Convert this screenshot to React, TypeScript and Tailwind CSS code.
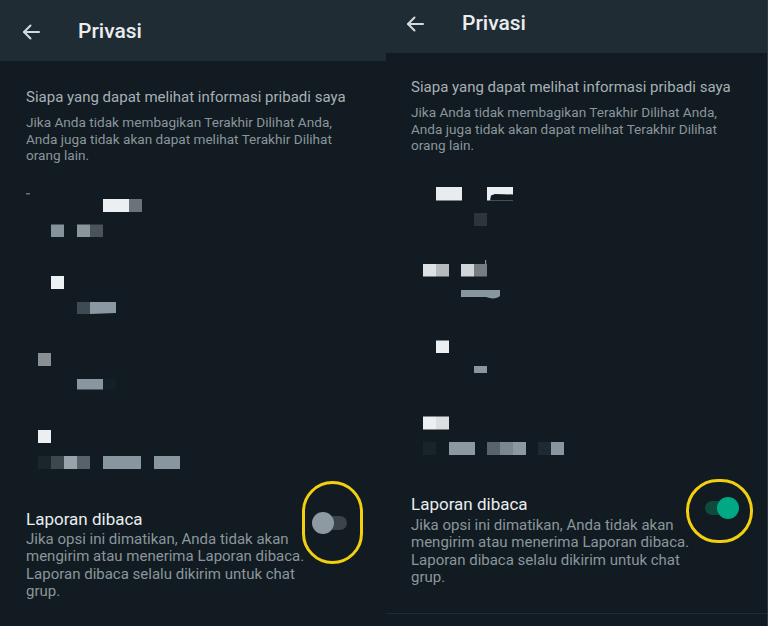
import React from "react";

type Block = { x: number; y: number; w: number; h: number; c: string };

// sensor mozaik (koordinat relatif ke svg)
const LEFT_BLOCKS: Block[] = [
  { x: 26, y: 10, w: 4, h: 1.5, c: "#6b7378" },
  { x: 103, y: 16, w: 26, h: 13, c: "#eceff1" },
  { x: 129, y: 16, w: 13, h: 13, c: "#6b7378" },
  { x: 51, y: 41.5, w: 13, h: 12.5, c: "#87939a" },
  { x: 77, y: 41.5, w: 13, h: 12.5, c: "#8a959c" },
  { x: 90, y: 41.5, w: 13, h: 12.5, c: "#4a5358" },
  { x: 51, y: 93, w: 13, h: 13, c: "#eef1f3" },
  { x: 77, y: 119, w: 13, h: 12, c: "#3f4b52" },
  { x: 38, y: 170, w: 13, h: 13, c: "#8a8f93" },
  { x: 77, y: 196, w: 26, h: 10.5, c: "#8896a0" },
  { x: 103, y: 196, w: 13, h: 10.5, c: "#142026" },
  { x: 38, y: 247, w: 13, h: 13, c: "#eceff1" },
  { x: 38, y: 273, w: 13, h: 13, c: "#1b262c" },
  { x: 51, y: 273, w: 13, h: 13, c: "#3d484e" },
  { x: 64, y: 273, w: 13, h: 13, c: "#98a3aa" },
  { x: 77, y: 273, w: 13, h: 13, c: "#57626a" },
  { x: 103, y: 273, w: 38, h: 13, c: "#8896a0" },
  { x: 154, y: 273, w: 26, h: 13, c: "#8896a0" },
];

const RIGHT_BLOCKS: Block[] = [
  { x: 50, y: 8, w: 26, h: 13.5, c: "#e9ecee" },
  { x: 101, y: 8, w: 26, h: 13.5, c: "#eceff1" },
  { x: 88, y: 34, w: 13, h: 13, c: "#2b353a" },
  { x: 37, y: 85, w: 13, h: 12.5, c: "#dde1e3" },
  { x: 50, y: 85, w: 13, h: 12.5, c: "#b6babc" },
  { x: 75, y: 85, w: 13, h: 12.5, c: "#d0d5d8" },
  { x: 88, y: 85, w: 13, h: 12.5, c: "#767c80" },
  { x: 50, y: 161.5, w: 13, h: 12.5, c: "#eceff1" },
  { x: 88, y: 187, w: 13, h: 7, c: "#8896a0" },
  { x: 37, y: 237.5, w: 13, h: 13, c: "#eceff1" },
  { x: 50, y: 237.5, w: 13, h: 13, c: "#dcdfe1" },
  { x: 37, y: 263, w: 13, h: 13, c: "#18232a" },
  { x: 63, y: 263, w: 26, h: 13, c: "#8d99a1" },
  { x: 101, y: 263, w: 13, h: 13, c: "#58646b" },
  { x: 114, y: 263, w: 13, h: 13, c: "#7b878e" },
  { x: 127, y: 263, w: 13, h: 13, c: "#8d99a1" },
  { x: 152, y: 263, w: 13, h: 13, c: "#1e2a31" },
  { x: 165, y: 263, w: 13, h: 13, c: "#8896a0" },
];

function BackArrow() {
  return (
    <svg width="18" height="16" viewBox="0 0 18 16" fill="none" stroke="#d3d9dc" strokeWidth="2" strokeLinecap="round" strokeLinejoin="round">
      <path d="M17 8H2" />
      <path d="M8.5 1.5 2 8l6.5 6.5" />
    </svg>
  );
}

function Switch({ on }: { on: boolean }) {
  return (
    <div className="relative h-[22px] w-[37px] shrink-0">
      <div className={`absolute left-[3px] top-[4px] h-[14px] w-[32px] rounded-full ${on ? "bg-[#0f4a3e]" : "bg-[#3a4449]"}`} />
      <div className={`absolute top-0 h-[22px] w-[22px] rounded-full ${on ? "left-[15px] bg-[#00a884]" : "left-0 bg-[#8e9aa2]"}`} />
    </div>
  );
}

function Intro() {
  return (
    <>
      <p className="text-[15px] leading-[18px] text-[#a7b0b5]">Siapa yang dapat melihat informasi pribadi saya</p>
      <p className="mt-[8px] w-[322px] text-[13.6px] leading-[16.5px] text-[#8a969c]">
        Jika Anda tidak membagikan Terakhir Dilihat Anda, Anda juga tidak akan dapat melihat Terakhir Dilihat orang lain.
      </p>
    </>
  );
}

function ReadReceipt({ on }: { on: boolean }) {
  return (
    <div>
      <p className="text-[17px] leading-[20px] text-[#e9edef]">Laporan dibaca</p>
      <p className={`${on ? "mt-[3px]" : "mt-[2px]"} w-[286px] text-[15px] leading-[17.5px] text-[#8a969c]`}>
        Jika opsi ini dimatikan, Anda tidak akan mengirim atau menerima Laporan dibaca. Laporan dibaca selalu dikirim untuk chat grup.
      </p>
    </div>
  );
}

export default function App() {
  return (
    <div className="flex h-[626px] w-[768px] overflow-hidden bg-[#111b21] font-['Roboto','Liberation_Sans',sans-serif]">
      {/* panel kiri: opsi mati */}
      <div className="flex w-[386px] shrink-0 flex-col">
        <div className="flex h-[61px] items-center bg-[#202c33] pl-[22px] pt-[2px]">
          <BackArrow />
          <span className="ml-[38px] text-[21px] font-medium text-[#e9edef]">Privasi</span>
        </div>
        <div className="flex-1 pl-[26px] pt-[27px]">
          <Intro />
          <div className="-ml-[26px] mt-[19px]">
            <svg width="386" height="290" className="block">
              {LEFT_BLOCKS.map((b, i) => (
                <rect key={i} x={b.x} y={b.y} width={b.w} height={b.h} fill={b.c} />
              ))}
              <polygon points="90,119 116,119 116,130 90,131" fill="#8a98a1" />
            </svg>
          </div>
          <div className="mt-[36px] flex items-start justify-between pr-[37px]">
            <ReadReceipt on={false} />
            <div className="relative mt-[3px]">
              <Switch on={false} />
              <div className="absolute -left-[10px] -top-[31px] h-[83px] w-[61px] rounded-full border-[3.5px] border-[#f3d00f]" />
            </div>
          </div>
        </div>
      </div>

      {/* panel kanan: opsi aktif */}
      <div className="flex w-[382px] shrink-0 flex-col border-r border-[#2c3a42]">
        <div className="flex h-[53px] items-center bg-[#202c33] pb-[5px] pl-[20px]">
          <BackArrow />
          <span className="ml-[38px] text-[21px] font-medium text-[#e9edef]">Privasi</span>
        </div>
        <div className="flex-1">
          <div className="pl-[25px] pt-[25px]">
            <Intro />
          </div>
          <div className="mt-[25px]">
            <svg width="382" height="285" className="block">
              {RIGHT_BLOCKS.map((b, i) => (
                <rect key={i} x={b.x} y={b.y} width={b.w} height={b.h} fill={b.c} />
              ))}
              <polygon points="104,21.5 105,16.5 109,15 127,15.5 127,21.5" fill="#111b21" />
              <path d="M75 111h39v6c-3 3-9 3-14 1h-25z" fill="#8896a0" />
              <rect x="99" y="81" width="1.2" height="4" fill="#8896a0" />
            </svg>
          </div>
          <div className="mt-[30px] border-b border-[#1f2c33] pb-[26px] pl-[25px] pr-[28px]">
            <div className="flex items-start justify-between">
              <ReadReceipt on />
              <div className="relative mt-[3px]">
                <Switch on />
                <div className="absolute -left-[16px] -top-[18px] h-[64px] w-[67px] rounded-full border-[3.5px] border-[#f3d00f]" />
              </div>
            </div>
          </div>
        </div>
      </div>
    </div>
  );
}
